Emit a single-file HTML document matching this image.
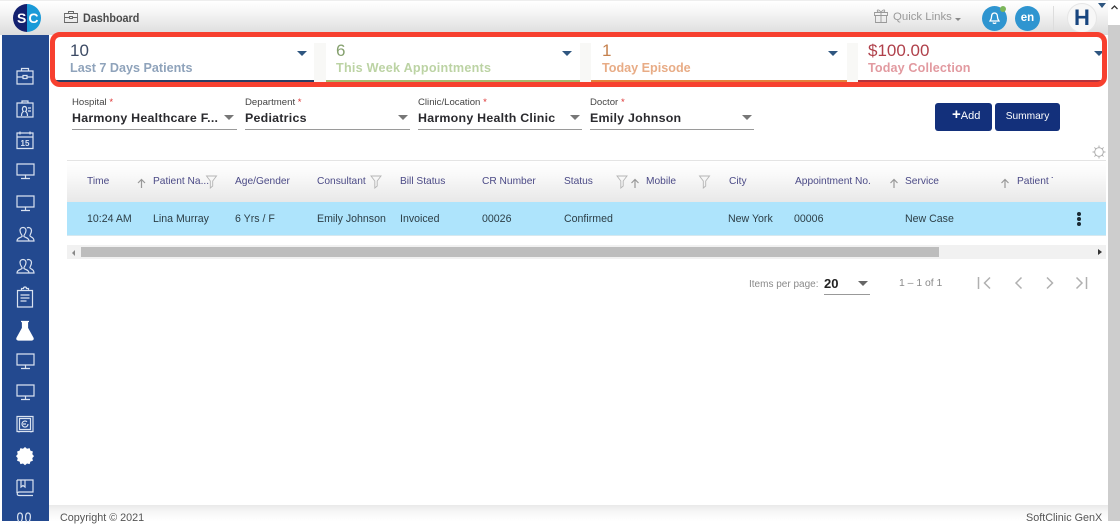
<!DOCTYPE html>
<html><head><meta charset="utf-8"><style>
*{box-sizing:border-box}
html,body{margin:0;padding:0}
body{width:1120px;height:521px;overflow:hidden;background:#fff;font-family:"Liberation Sans",sans-serif;position:relative;color:#333}
#w{position:absolute;left:0;top:0;width:1120px;height:521px;filter:blur(.3px)}
.a{position:absolute;white-space:nowrap}
.th{position:absolute;top:176px;font-size:10.2px;line-height:12px;color:#4b4a86;white-space:nowrap}
.td{position:absolute;top:213px;font-size:10.6px;line-height:13px;color:#2c3e46;white-space:nowrap}
.num{position:absolute;top:42px;font-size:17px;line-height:18px;white-space:nowrap}
.lab{position:absolute;top:61px;font-size:12.6px;line-height:14px;font-weight:bold;white-space:nowrap}
.car{position:absolute;top:51px;width:0;height:0;border-left:5px solid transparent;border-right:5px solid transparent;border-top:5px solid #2f5680}
.fl{position:absolute;top:97px;font-size:9.6px;line-height:12px;color:#444;white-space:nowrap}
.fl b{color:#d33;font-weight:normal}
.fv{position:absolute;top:111px;font-size:12.4px;line-height:15px;font-weight:bold;color:#2a2a2e;white-space:nowrap;letter-spacing:.25px}
.fc{position:absolute;top:115px;width:0;height:0;border-left:5px solid transparent;border-right:5px solid transparent;border-top:5px solid #777}
.fu{position:absolute;top:129px;height:1px;background:#9a9a9a}
svg{position:absolute;overflow:visible}
.s{fill:none;stroke:#d9e2f0;stroke-width:1.2}
.g{fill:none;stroke:#b5b5b5;stroke-width:.9}
.ar{fill:none;stroke:#999;stroke-width:1.2}
</style></head><body><div id="w">

<!-- top bar -->
<div class="a" style="left:0;top:0;width:1108px;height:35px;background:linear-gradient(#fff 0,#f8f8f8 25%,#dcdcdc 100%);border-top:1px solid #eee"></div>
<div class="a" style="left:1108px;top:0;width:12px;height:25px;background:#fff"></div>
<div class="a" style="left:1108px;top:25px;width:12px;height:496px;background:#cdcdcd"></div>
<svg style="left:1110px;top:3px" width="9" height="8"><path d="M1.500 6 L4.500 3 L7.500 6" fill="none" stroke="#333" stroke-width="1.300"/></svg>
<div class="a" style="left:1098px;top:3px;width:0;height:0;border-left:4px solid transparent;border-right:4px solid transparent;border-top:5px solid #2f5680"></div>

<!-- logo -->
<div class="a" style="left:13px;top:4px;width:28px;height:28px;border-radius:50%;background:linear-gradient(90deg,#13206f 0,#13206f 50%,#1a9ad8 50%,#1a9ad8 100%)"></div>
<div class="a" style="left:17px;top:9px;font-size:14px;line-height:18px;font-weight:bold;color:#fff;letter-spacing:2px">SC</div>

<svg style="left:64px;top:11px" width="14" height="12" viewBox="0 0 14 12"><path d="M.5 2.500h13v9H.5zM4.500 2.500V.5h5v2M.5 6.500h5M8.500 6.500h5M5.500 5.500h3v2h-3z" fill="none" stroke="#666" stroke-width=".9"/></svg>
<div class="a" style="left:83px;top:11px;font-size:12.400px;line-height:15px;font-weight:bold;color:#4a4a4a;transform:scaleX(.87);transform-origin:left center">Dashboard</div>

<svg style="left:874px;top:9px" width="14" height="14" viewBox="0 0 14 14"><path d="M.5 3.500h13v3H.5zM1.500 6.500v7h11v-7M7 3.500v10M7 3.500C5 0 2.500 .5 3.500 2.500 4 3.300 6 3.500 7 3.500 8 3.500 10 3.300 10.500 2.500 11.500 .5 9 0 7 3.500" fill="none" stroke="#999" stroke-width=".9"/></svg>
<div class="a" style="left:893px;top:10px;font-size:11.400px;line-height:14px;color:#9a9a9a">Quick Links</div>
<div class="a" style="left:955px;top:18px;width:0;height:0;border-left:3px solid transparent;border-right:3px solid transparent;border-top:3px solid #888"></div>

<div class="a" style="left:982px;top:6px;width:25px;height:25px;border-radius:50%;background:#2f95d0"></div>
<svg style="left:988px;top:12px" width="13" height="13" viewBox="0 0 13 13"><path d="M6.500 1C4.200 1 3.500 3 3.500 5c0 2-1 3-1.500 4h9c-.5-1-1.500-2-1.500-4 0-2-.7-4-3-4zM5 10.500c.4 1.200 2.600 1.200 3 0" fill="none" stroke="#fff" stroke-width="1.300"/></svg>
<div class="a" style="left:1000px;top:6px;width:6px;height:6px;border-radius:50%;background:#7cb65a"></div>
<div class="a" style="left:1015px;top:6px;width:25px;height:25px;border-radius:50%;background:#2f95d0;color:#fff;font-size:11.500px;font-weight:bold;line-height:25px;text-align:center">en</div>
<div class="a" style="left:1053px;top:6px;width:1px;height:24px;background:#ddd"></div>
<div class="a" style="left:1067px;top:3px;width:30px;height:30px;border-radius:50%;background:#f7f7f7;border:1px solid #e6e6e6;color:#17457f;font-size:22px;font-weight:bold;line-height:28px;text-align:center">H</div>

<!-- sidebar -->
<div class="a" style="left:2px;top:35px;width:47px;height:486px;background:#23498f"></div>
<svg style="left:0;top:0" width="50" height="521">
<g class="s">
<path d="M17 71h16v13H17zM21.500 71v-2.500h7V71M17 77h6M27 77h6M23 75.500h4v3h-4z"/>
<path d="M17 103h16v14H17zM22 103v-2h6v2M21.500 116c0-3 1-4 2-4.500-2-2-1-5 1-5s3 3 1 5c1 .5 2 1.500 2 4.500M28 108h3M28 111h3"/>
<path d="M17 133h16v15.500H17zM17 137h16M20 131.500v3M30 131.500v3"/>
<path d="M17 164h17v11H17zM25.500 175v3.500M21 178.500h9"/>
<path d="M17 196h17v11H17zM25.500 207v3.500M21 210.500h9"/>
<path d="M17 241c0-3 3-3 5-4.500 1-1-2-2.500-2-6 0-2 1.500-3 3-3s3 1 3 3c0 3.500-3 5-2 6 2 1.500 5 1.500 5 4.500zM27 228c1-.8 4-1 4.500 2.500 0 3-2 4.500-1.500 5.500 1.500 1.500 4 1.500 4 5h-5"/>
<path d="M17 273c0-3 3-3 5-4.500 1-1-2-2.500-2-6 0-2 1.500-3 3-3s3 1 3 3c0 3.500-3 5-2 6 2 1.500 5 1.500 5 4.500zM27 260c1-.8 4-1 4.500 2.500 0 3-2 4.500-1.500 5.500 1.500 1.500 4 1.500 4 5h-5"/>
<path d="M17.500 290.500h15v16.500h-15zM21.500 290.500v-2h2c0-2 3-2 3 0h2v2h-7zM20.500 295h9M20.500 298h9M20.500 301h6"/>
<path d="M17 354h17v11H17zM25.500 365v3.500M21 368.500h9"/>
<path d="M17 385h17v11H17zM25.500 396v3.500M21 399.500h9"/>
<path d="M17 416.500h16v15H17zM19.500 418.500h11v11h-11zM28 424a3 3 0 1 1-1-2.200M23 424h3M19 431.500v1M31 431.500v1"/>
<path d="M17 480h16v12H19.500c-3 0-3 3.500 0 3.500H33M17 493V480M21 480v7l2-1.500 2 1.500v-7"/>
<path d="M19 522c-2-3-2-9 1-9s3 5 1 9M27 522c-2-3-2-9 1-9s3 5 1 9"/>
</g>
<text x="25" y="146" text-anchor="middle" font-family="Liberation Sans" font-size="8" font-weight="bold" fill="#d9e2f0">15</text>
<path d="M22.500 322h5v6l5.500 10c.5 1-.2 2-1.500 2h-13c-1.300 0-2-1-1.500-2l5.500-10zM21 321.500h8" fill="#fff" stroke="#fff" stroke-width="1.200"/>
<path d="M25 447l2 1.700 2.600-.6.800 2.500 2.500.9-.6 2.600 1.700 2-1.700 2 .6 2.600-2.500.9-.8 2.500-2.600-.6-2 1.700-2-1.700-2.600.6-.8-2.500-2.500-.9.6-2.600-1.700-2 1.700-2-.6-2.600 2.500-.9.8-2.500 2.600.6z" fill="#fff"/>
</svg>

<!-- KPI strip -->
<div class="a" style="left:49px;top:35px;width:1059px;height:50px;background:#fff"></div>
<div class="a" style="left:55px;top:37px;width:259px;height:45px;background:#fff;border-bottom:2px solid #2b3e63"></div>
<div class="a" style="left:326px;top:37px;width:254px;height:45px;background:#fff;border-bottom:2px solid #a6b96f"></div>
<div class="a" style="left:591px;top:37px;width:256px;height:45px;background:#fff;border-bottom:2px solid #e3813d"></div>
<div class="a" style="left:858px;top:37px;width:247px;height:45px;background:#fff;border-bottom:2px solid #b5343c"></div>
<div class="a" style="left:314px;top:43px;width:12px;height:39px;background:#f8f8f6"></div>
<div class="a" style="left:580px;top:43px;width:11px;height:39px;background:#f8f8f6"></div>
<div class="a" style="left:847px;top:43px;width:11px;height:39px;background:#f8f8f6"></div>

<div class="num" style="left:70px;color:#3c4a64">10</div>
<div class="lab" style="left:70px;color:#8fa3bb">Last 7 Days Patients</div>
<div class="car" style="left:297px"></div>
<div class="num" style="left:336px;color:#85a06e">6</div>
<div class="lab" style="left:336px;color:#bcd3a4;letter-spacing:.25px">This Week Appointments</div>
<div class="car" style="left:562px"></div>
<div class="num" style="left:602px;color:#c5814e">1</div>
<div class="lab" style="left:602px;color:#e8ac86">Today Episode</div>
<div class="car" style="left:828px"></div>
<div class="num" style="left:868px;color:#b0414b">$100.00</div>
<div class="lab" style="left:868px;color:#e29aa0;letter-spacing:.13px">Today Collection</div>
<div class="car" style="left:1094px"></div>

<!-- red highlight -->
<div class="a" style="left:50px;top:32px;width:1057px;height:55px;border:5px solid #f7402f;border-radius:10px"></div>

<!-- filters -->
<div class="fl" style="left:72px">Hospital <b>*</b></div>
<div class="fv" style="left:72px">Harmony Healthcare F...</div>
<div class="fc" style="left:224px"></div>
<div class="fu" style="left:72px;width:165px"></div>
<div class="fl" style="left:245px">Department <b>*</b></div>
<div class="fv" style="left:245px">Pediatrics</div>
<div class="fc" style="left:398px"></div>
<div class="fu" style="left:245px;width:165px"></div>
<div class="fl" style="left:418px">Clinic/Location <b>*</b></div>
<div class="fv" style="left:418px">Harmony Health Clinic</div>
<div class="fc" style="left:570px"></div>
<div class="fu" style="left:418px;width:164px"></div>
<div class="fl" style="left:590px">Doctor <b>*</b></div>
<div class="fv" style="left:590px">Emily Johnson</div>
<div class="fc" style="left:742px"></div>
<div class="fu" style="left:590px;width:164px"></div>

<div class="a" style="left:935px;top:103px;width:57px;height:28px;background:#13307b;border-radius:3px;color:#fff;font-size:11px;line-height:27px;padding-left:17px"><span style="font-size:15px;font-weight:bold;line-height:14px">+</span>Add</div>
<div class="a" style="left:995px;top:103px;width:65px;height:28px;background:#13307b;border-radius:3px;color:#fff;font-size:10.200px;line-height:27px;text-align:center">Summary</div>

<svg style="left:1092px;top:145px" width="14" height="14" viewBox="0 0 14 14"><circle cx="7" cy="7" r="4.300" fill="none" stroke="#aaa" stroke-width=".9"/><path d="M7 .5v2M7 11.500v2M.5 7h2M11.500 7h2M2.400 2.400l1.400 1.400M10.200 10.200l1.400 1.400M2.400 11.600l1.400-1.400M10.200 3.800l1.400-1.400" stroke="#aaa" stroke-width=".9"/></svg>

<!-- table -->
<div class="a" style="left:67px;top:160px;width:1039px;height:42px;background:linear-gradient(#fff,#fafafa 30%,#e8e8e8);border-top:1px solid #e4e4e4"></div>
<div class="a" style="left:67px;top:202px;width:1039px;height:34px;background:#aee4fc;border-bottom:1px solid #d6e8ef"></div>

<div class="th" style="left:87px">Time</div>
<div class="th" style="left:153px">Patient Na...</div>
<div class="th" style="left:235px">Age/Gender</div>
<div class="th" style="left:317px">Consultant</div>
<div class="th" style="left:400px">Bill Status</div>
<div class="th" style="left:482px">CR Number</div>
<div class="th" style="left:564px">Status</div>
<div class="th" style="left:646px">Mobile</div>
<div class="th" style="left:729px">City</div>
<div class="th" style="left:795px">Appointment No.</div>
<div class="th" style="left:905px">Service</div>
<div class="a" style="left:1017px;top:176px;width:36px;overflow:hidden;font-size:10.200px;line-height:12px;color:#4b4a86">Patient Type</div>

<svg style="left:0;top:0" width="1120" height="200">
<g class="g">
<path d="M206.500 176h10l-3.800 5v5l-2.400 2v-7z"/>
<path d="M371 176h10l-3.800 5v5l-2.400 2v-7z"/>
<path d="M617 176h10l-3.800 5v5l-2.400 2v-7z"/>
<path d="M699.500 176h10l-3.800 5v5l-2.400 2v-7z"/>
</g>
<g class="ar">
<path d="M141.500 188v-8M138 183l3.500-3.500 3.500 3.500"/>
<path d="M635 188v-8M631.500 183l3.500-3.500 3.500 3.500"/>
<path d="M894 188v-8M890.500 183l3.500-3.500 3.500 3.500"/>
<path d="M1005 188v-8M1001.500 183l3.500-3.500 3.500 3.500"/>
</g>
</svg>

<div class="td" style="left:87px">10:24 AM</div>
<div class="td" style="left:153px">Lina Murray</div>
<div class="td" style="left:235px">6 Yrs / F</div>
<div class="td" style="left:317px">Emily Johnson</div>
<div class="td" style="left:400px">Invoiced</div>
<div class="td" style="left:482px">00026</div>
<div class="td" style="left:564px">Confirmed</div>
<div class="td" style="left:728px">New York</div>
<div class="td" style="left:794px">00006</div>
<div class="td" style="left:905px">New Case</div>
<div class="a" style="left:1077px;top:212px;width:4px;height:4px;border-radius:50%;background:#1a2a33"></div>
<div class="a" style="left:1077px;top:217px;width:4px;height:4px;border-radius:50%;background:#1a2a33"></div>
<div class="a" style="left:1077px;top:222px;width:4px;height:4px;border-radius:50%;background:#1a2a33"></div>

<!-- scrollbar -->
<div class="a" style="left:67px;top:245px;width:1039px;height:14px;background:#f1f1f1"></div>
<div class="a" style="left:81px;top:247px;width:858px;height:10px;background:#bdbdbd"></div>
<div class="a" style="left:72px;top:250px;width:0;height:0;border-top:3px solid transparent;border-bottom:3px solid transparent;border-right:3px solid #888"></div>
<div class="a" style="left:1098px;top:249px;width:0;height:0;border-top:3px solid transparent;border-bottom:3px solid transparent;border-left:4px solid #333"></div>

<!-- paginator -->
<div class="a" style="left:749px;top:278px;font-size:10px;line-height:13px;color:#8a8a8a">Items per page:</div>
<div class="a" style="left:824px;top:276px;font-size:13px;line-height:16px;font-weight:bold;color:#222">20</div>
<div class="a" style="left:858px;top:281px;width:0;height:0;border-left:5px solid transparent;border-right:5px solid transparent;border-top:5px solid #666"></div>
<div class="a" style="left:824px;top:294px;width:46px;height:1px;background:#999"></div>
<div class="a" style="left:899px;top:277px;font-size:10.400px;line-height:13px;color:#8a8a8a">1 – 1 of 1</div>
<svg style="left:976px;top:275px" width="112" height="16"><g fill="none" stroke="#b0b0b0" stroke-width="1.500"><path d="M2.500 2v12M14 2.500L8.500 8l5.500 5.500"/><path d="M45.500 2.500L40 8l5.500 5.500"/><path d="M71 2.500L76.500 8 71 13.500"/><path d="M100.500 2.500L106 8l-5.500 5.500M110.500 2v12"/></g></svg>

<!-- footer -->
<div class="a" style="left:49px;top:505px;width:1059px;height:16px;background:linear-gradient(#e9e9e9,#f6f6f6 40%,#fff)"></div>
<div class="a" style="left:60px;top:511px;font-size:10.800px;line-height:14px;color:#555">Copyright © 2021</div>
<div class="a" style="left:1026px;top:511px;font-size:10.800px;line-height:14px;color:#555">SoftClinic GenX</div>
</div></body></html>
